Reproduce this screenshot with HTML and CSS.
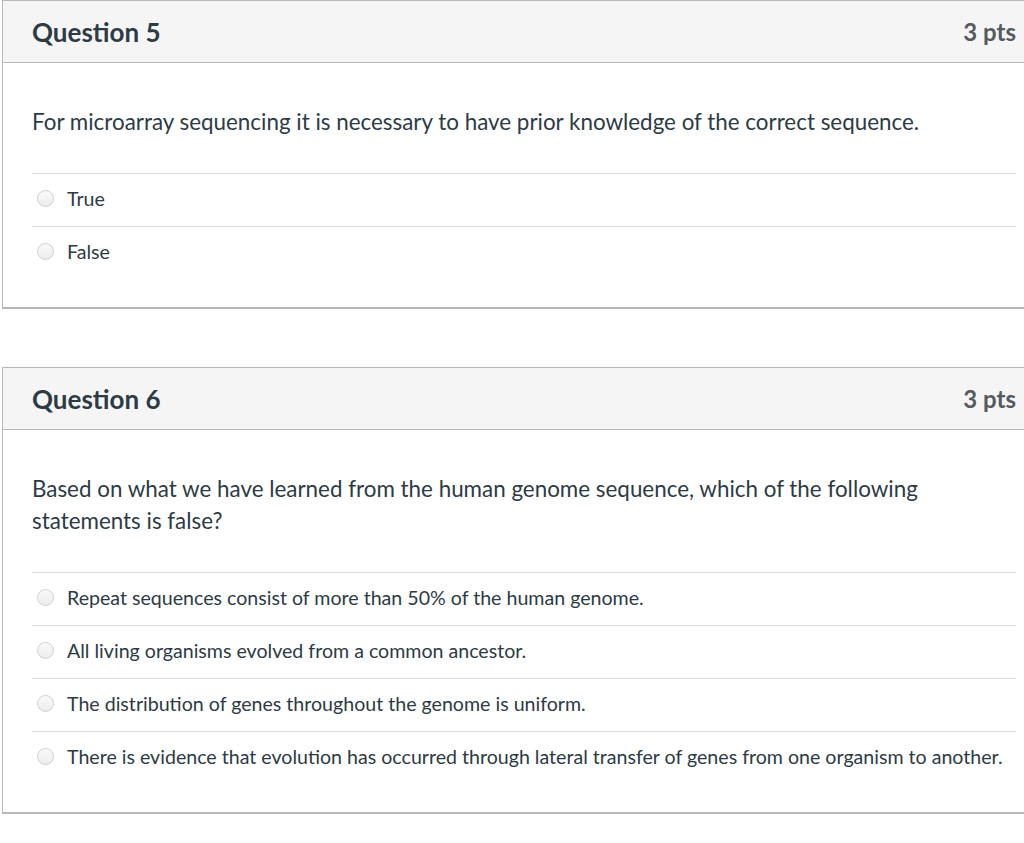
FILE: index.html
```html
<!DOCTYPE html>
<html>
<head>
<meta charset="utf-8">
<link rel="stylesheet" href="styles.css">
</head>
<body>
<div class="page">
  <div class="quiz">
    <div class="quiz-header">
      <h2 class="quiz-title">Question 5</h2>
      <span class="quiz-pts">3 pts</span>
    </div>
    <div class="quiz-body">
      <p class="quiz-text">For microarray sequencing it is necessary to have prior knowledge of the correct sequence.</p>
      <div class="answers">
        <label class="answer"><span class="radio"></span><span class="answer-text">True</span></label>
        <label class="answer"><span class="radio"></span><span class="answer-text">False</span></label>
      </div>
    </div>
  </div>

  <div class="quiz">
    <div class="quiz-header">
      <h2 class="quiz-title">Question 6</h2>
      <span class="quiz-pts">3 pts</span>
    </div>
    <div class="quiz-body">
      <p class="quiz-text">Based on what we have learned from the human genome sequence, which of the following statements is false?</p>
      <div class="answers">
        <label class="answer"><span class="radio"></span><span class="answer-text">Repeat sequences consist of more than 50% of the human genome.</span></label>
        <label class="answer"><span class="radio"></span><span class="answer-text">All living organisms evolved from a common ancestor.</span></label>
        <label class="answer"><span class="radio"></span><span class="answer-text">The distribution of genes throughout the genome is uniform.</span></label>
        <label class="answer"><span class="radio"></span><span class="answer-text">There is evidence that evolution has occurred through lateral transfer of genes from one organism to another.</span></label>
      </div>
    </div>
  </div>
</div>
</body>
</html>
```

FILE: styles.css
```css
html, body {
  margin: 0;
  padding: 0;
  background: #ffffff;
  overflow: hidden;
}

body {
  font-family: Lato, "Noto Sans", "Liberation Sans", sans-serif;
  color: #2d3b45;
}

.page {
  display: flex;
  flex-direction: column;
  gap: 58px;
  padding-left: 2px;
  width: 1040px;
}

.quiz {
  border: 1px solid #b8b8b8;
  border-bottom-width: 2px;
  background: #fff;
}

.quiz-header {
  display: flex;
  align-items: center;
  justify-content: space-between;
  height: 61px;
  padding: 0 25px 0 29px;
  background: #f5f5f5;
  border-bottom: 1px solid #b8b8b8;
}

.quiz-title {
  margin: 0;
  font-size: 26px;
  font-weight: 700;
  color: #2d3b45;
}

.quiz-pts {
  font-size: 24px;
  font-weight: 700;
  color: #555a5e;
}

.quiz-body {
  padding: 43px 25px 28px 29px;
}

.quiz-text {
  margin: 0 0 35px 0;
  font-size: 22.4px;
  line-height: 32px;
  color: #2d3b45;
}

.answers {
  display: flex;
  flex-direction: column;
}

.answer {
  display: flex;
  align-items: center;
  box-sizing: border-box;
  height: 53px;
  padding-bottom: 4px;
  border-top: 1px solid #dcdcdc;
  gap: 13px;
  padding-left: 5px;
}

.radio {
  width: 15px;
  height: 15px;
  border-radius: 50%;
  border: 1px solid #cfcfcf;
  background: linear-gradient(#fafafa, #ececec);
  flex: none;
}

.answer-text {
  font-size: 19.6px;
  color: #2d3b45;
}
```
